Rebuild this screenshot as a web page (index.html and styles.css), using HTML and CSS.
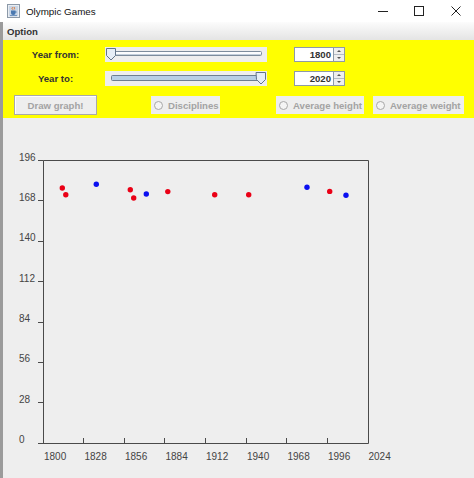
FILE: index.html
```html
<!DOCTYPE html>
<html>
<head>
<meta charset="utf-8">
<title>Olympic Games</title>
<link rel="stylesheet" href="styles.css">
</head>
<body>
<div class="titlebar">
  <svg class="appicon" width="13" height="14" viewBox="0 0 13 14">
    <rect x="0.5" y="0.5" width="12" height="13" fill="#e9edf2" stroke="#8c99a8"/>
    <rect x="2" y="2" width="9" height="10" fill="#c9d6e6"/>
    <path d="M4 6.5 h4.5 v2.5 a2 2 0 0 1 -2 2 h-0.5 a2 2 0 0 1 -2 -2 z" fill="#4a78b0"/>
    <path d="M8.5 7 a1.2 1.2 0 0 1 0 2" fill="none" stroke="#4a78b0" stroke-width="0.8"/>
    <path d="M5.5 5.5 q-1 -1 0 -2.2 M7 5.5 q1 -1.2 0 -2.5" fill="none" stroke="#e06a20" stroke-width="0.9"/>
    <rect x="3" y="11.3" width="7" height="0.8" fill="#4a78b0"/>
  </svg>
  <span class="title">Olympic Games</span>
  <div class="controls">
    <div class="ctl">
      <svg width="10" height="10" viewBox="0 0 10 10"><line x1="0" y1="5.5" x2="10" y2="5.5" class="glyph"/></svg>
    </div>
    <div class="ctl">
      <svg width="10" height="10" viewBox="0 0 10 10"><rect x="0.5" y="0.5" width="9" height="9" fill="none" class="glyph"/></svg>
    </div>
    <div class="ctl">
      <svg width="10" height="10" viewBox="0 0 10 10"><path d="M0.5 0.5 L9.5 9.5 M9.5 0.5 L0.5 9.5" class="glyph"/></svg>
    </div>
  </div>
</div>

<div class="frame">
  <div class="menubar"><span class="menu">Option</span></div>

  <div class="panel">
    <div class="row">
      <div class="label">Year from:</div>
      <div class="slider">
        <svg width="162" height="15" viewBox="0 0 162 15">
          <rect x="5.5" y="4.5" width="151" height="4" rx="1" class="track-empty"/>
          <line x1="6" y1="7.5" x2="156" y2="7.5" class="track-line"/>
          <path d="M1.5 1.5 H10.5 V8.5 L6 13 L1.5 8.5 Z" class="thumb"/>
        </svg>
      </div>
      <div class="spinner">
        <div class="field">1800</div>
        <div class="arrows">
          <div class="arrow"><i class="up"></i></div>
          <div class="arrow"><i class="down"></i></div>
        </div>
      </div>
    </div>

    <div class="row">
      <div class="label">Year to:</div>
      <div class="slider">
        <svg width="162" height="15" viewBox="0 0 162 15">
          <rect x="6.5" y="4.5" width="149" height="5" rx="1" class="track-full"/>
          <path d="M151 1.5 H160.5 V8.5 L156 13 L151.5 8.5 Z" class="thumb"/>
        </svg>
      </div>
      <div class="spinner">
        <div class="field">2020</div>
        <div class="arrows">
          <div class="arrow"><i class="up"></i></div>
          <div class="arrow"><i class="down"></i></div>
        </div>
      </div>
    </div>

    <div class="row3">
      <button class="btn" disabled>Draw graph!</button>
      <div class="radio r-disc"><span class="circle"></span>Disciplines</div>
      <div class="radio r-height"><span class="circle"></span>Average height</div>
      <div class="radio r-weight"><span class="circle"></span>Average weight</div>
    </div>
  </div>

  <div class="chartarea">
    <svg class="chart" width="471" height="360" viewBox="3 118 471 360">
      <g class="axis">
        <line x1="43.5" y1="160.5" x2="368.5" y2="160.5"/>
        <line x1="368.5" y1="160.5" x2="368.5" y2="443.5"/>
        <line x1="43.5" y1="160.5" x2="43.5" y2="443.5"/>
        <line x1="38" y1="443.5" x2="368.5" y2="443.5"/>
        <line x1="38" y1="160.5" x2="43.5" y2="160.5"/>
        <line x1="38" y1="200.5" x2="43.5" y2="200.5"/>
        <line x1="38" y1="241.5" x2="43.5" y2="241.5"/>
        <line x1="38" y1="281.5" x2="43.5" y2="281.5"/>
        <line x1="38" y1="322.5" x2="43.5" y2="322.5"/>
        <line x1="38" y1="362.5" x2="43.5" y2="362.5"/>
        <line x1="38" y1="402.5" x2="43.5" y2="402.5"/>
        <line x1="83.5" y1="438" x2="83.5" y2="443.5"/>
        <line x1="124.5" y1="438" x2="124.5" y2="443.5"/>
        <line x1="164.5" y1="438" x2="164.5" y2="443.5"/>
        <line x1="205.5" y1="438" x2="205.5" y2="443.5"/>
        <line x1="246.5" y1="438" x2="246.5" y2="443.5"/>
        <line x1="286.5" y1="438" x2="286.5" y2="443.5"/>
        <line x1="327.5" y1="438" x2="327.5" y2="443.5"/>
      </g>
      <g class="ticklabel">
        <text x="19" y="160.5">196</text>
        <text x="19" y="200.5">168</text>
        <text x="19" y="241">140</text>
        <text x="19" y="281.5">112</text>
        <text x="19" y="322">84</text>
        <text x="19" y="362">56</text>
        <text x="19" y="402.5">28</text>
        <text x="19" y="443">0</text>
        <text x="44" y="460">1800</text>
        <text x="84.5" y="460">1828</text>
        <text x="125" y="460">1856</text>
        <text x="165.5" y="460">1884</text>
        <text x="206" y="460">1912</text>
        <text x="247" y="460">1940</text>
        <text x="287.5" y="460">1968</text>
        <text x="328" y="460">1996</text>
        <text x="368.5" y="460">2024</text>
      </g>
      <g class="dot-red">
        <circle cx="62.3" cy="188" r="2.7"/>
        <circle cx="65.8" cy="194.8" r="2.7"/>
        <circle cx="130.3" cy="189.8" r="2.7"/>
        <circle cx="133.7" cy="198" r="2.7"/>
        <circle cx="167.8" cy="191.6" r="2.7"/>
        <circle cx="214.7" cy="194.8" r="2.7"/>
        <circle cx="248.7" cy="194.8" r="2.7"/>
        <circle cx="329.7" cy="191.4" r="2.7"/>
      </g>
      <g class="dot-blue">
        <circle cx="96.3" cy="184.3" r="2.7"/>
        <circle cx="146.3" cy="194" r="2.7"/>
        <circle cx="307" cy="187.3" r="2.7"/>
        <circle cx="346" cy="195.3" r="2.7"/>
      </g>
    </svg>
  </div>
</div>
</body>
</html>
```

FILE: styles.css
```css
* {
  box-sizing: border-box;
}

html, body {
  margin: 0;
  padding: 0;
}

body {
  width: 474px;
  height: 478px;
  overflow: hidden;
  background: #eeeeee;
  font-family: "Liberation Sans", Arial, sans-serif;
}

/* ---------- title bar ---------- */
.titlebar {
  height: 22px;
  background: #ffffff;
  display: flex;
  align-items: center;
}

.appicon {
  margin-left: 7px;
  flex: none;
}

.title {
  margin-left: 6px;
  font-size: 9.8px;
  color: #111;
}

.controls {
  margin-left: auto;
  display: flex;
  height: 22px;
}

.ctl {
  width: 36.6px;
  display: flex;
  align-items: center;
  justify-content: center;
}

.glyph {
  stroke: #222;
  stroke-width: 1;
  fill: none;
}

/* ---------- frame ---------- */
.frame {
  height: 456px;
  border-left: 3px solid #9b9b9b;
  display: flex;
  flex-direction: column;
}

.menubar {
  height: 18px;
  flex: none;
  background: linear-gradient(#fcfcfc, #e4e4e4);
  display: flex;
  align-items: center;
  padding-left: 4px;
}

.menu {
  font-weight: bold;
  font-size: 9.6px;
  color: #333;
}

/* ---------- control panel ---------- */
.panel {
  height: 78px;
  flex: none;
  background: #ffff00;
  padding: 7px 0 0 3px;
  display: flex;
  flex-direction: column;
}

.row {
  height: 15px;
  display: flex;
  align-items: center;
}

.row + .row {
  margin-top: 9px;
}

.label {
  width: 99px;
  text-align: center;
  font-weight: bold;
  font-size: 9.6px;
  color: #333;
}

.slider {
  width: 162px;
  height: 15px;
  background: #eeeeee;
}

.slider svg {
  display: block;
}

.track-empty {
  fill: #fbfcfd;
  stroke: #7d8c9c;
  stroke-width: 1;
}

.track-line {
  stroke: #c3cfdc;
  stroke-width: 1;
}

.track-full {
  fill: #b8cfe5;
  stroke: #6e7f91;
  stroke-width: 1;
}

.thumb {
  fill: #e6eef7;
  stroke: #63758a;
  stroke-width: 1;
  stroke-linejoin: round;
}

.spinner {
  margin-left: 27px;
  width: 51px;
  height: 15px;
  display: flex;
}

.field {
  width: 39px;
  height: 15px;
  background: #ffffff;
  border: 1px solid #8e9aa7;
  border-right: none;
  font-weight: bold;
  font-size: 9.6px;
  color: #333;
  text-align: right;
  padding-right: 2px;
  line-height: 13px;
}

.arrows {
  width: 12px;
  height: 15px;
  display: flex;
  flex-direction: column;
  border: 1px solid #8e9aa7;
}

.arrow {
  flex: 1;
  background: #eeeeee;
  display: flex;
  align-items: center;
  justify-content: center;
}

.arrow + .arrow {
  border-top: 1px solid #b4bcc6;
}

.up {
  width: 0;
  height: 0;
  border-left: 2px solid transparent;
  border-right: 2px solid transparent;
  border-bottom: 2px solid #555;
}

.down {
  width: 0;
  height: 0;
  border-left: 2px solid transparent;
  border-right: 2px solid transparent;
  border-top: 2px solid #555;
}

.row3 {
  margin-top: 9px;
  height: 20px;
  display: flex;
  align-items: center;
}

.btn {
  margin: 0 0 0 8px;
  width: 83px;
  height: 20px;
  padding: 0;
  background: #eeeeee;
  border: 1px solid #a9a9a9;
  box-shadow: inset 1px 1px 0 #ffffff;
  font-family: "Liberation Sans", Arial, sans-serif;
  font-weight: bold;
  font-size: 9.6px;
  color: #a3a3a3;
}

.radio {
  height: 18px;
  background: #eeeeee;
  display: flex;
  align-items: center;
  padding-left: 3px;
  font-weight: bold;
  font-size: 9.6px;
  color: #a3a3a3;
  white-space: nowrap;
}

.circle {
  width: 9px;
  height: 9px;
  border-radius: 50%;
  border: 1px solid #a8a8a8;
  background: #f4f4f4;
  margin-right: 5px;
  flex: none;
}

.r-disc {
  margin-left: 54px;
  width: 69px;
}

.r-height {
  margin-left: 56px;
  width: 88px;
}

.r-weight {
  margin-left: 9px;
  width: 91px;
}

/* ---------- chart ---------- */
.chartarea {
  height: 360px;
  flex: none;
  background: #eeeeee;
}

.chart {
  display: block;
}

.axis line {
  stroke: #4a4a4a;
  stroke-width: 1;
}

.ticklabel text {
  font-family: "Liberation Sans", Arial, sans-serif;
  font-size: 10px;
  fill: #444;
}

.dot-red circle {
  fill: #ea0016;
}

.dot-blue circle {
  fill: #0a0ff0;
}
```
